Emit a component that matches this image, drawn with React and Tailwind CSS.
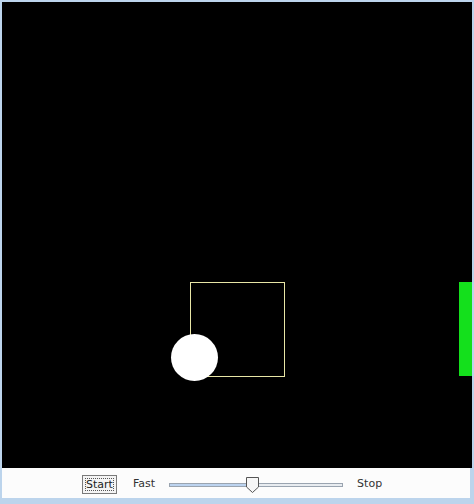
export default function App() {
  return (
    <div className="w-[474px] h-[504px] bg-[#bcd4ec] pt-[2px] pl-[2px] pr-[2px] pb-[6px] flex flex-col" style={{ fontFamily: '"DejaVu Sans", "Liberation Sans", sans-serif' }}>
      {/* Animation canvas */}
      <div className="relative h-[466px] bg-black overflow-hidden">
        <div className="absolute left-[188px] top-[280px] w-[95px] h-[95px] border border-[#e8e6a6]" />
        <div className="absolute left-[169px] top-[332px] w-[47px] h-[47px] rounded-full bg-white" />
        <div className="absolute left-[457px] top-[280px] w-[13px] h-[94px] bg-[#14e01c]" />
      </div>

      {/* Controls */}
      <div className="h-[30px] bg-[#fcfcfc] mr-[2px] flex items-center pl-[80px] pt-[3px] text-[11px] text-[#333]">
        <button className="w-[35px] h-[19px] border border-[#7a7a7a] bg-[#f4f4f4] p-[2px] flex">
          <span className="flex-1 border border-dotted border-[#555] flex items-center justify-center leading-none text-[11px] text-[#222]">Start</span>
        </button>
        <span className="ml-[16px]">Fast</span>
        <div className="ml-[14px] relative w-[174px] h-[19px] flex items-center">
          <div className="w-full h-[4px] border border-[#9aa4b0] bg-[#e8ecf0] flex">
            <div className="w-[76px] h-full bg-[#bcd3ef]" />
          </div>
          <svg className="absolute left-[76px] top-[1px]" width="15" height="18" viewBox="0 0 15 18">
            <path d="M1.5 1.5 H13.5 V11 L7.5 16.5 L1.5 11 Z" fill="#f6f6f6" stroke="#555" strokeWidth="1" />
          </svg>
        </div>
        <span className="ml-[14px]">Stop</span>
      </div>
    </div>
  );
}
